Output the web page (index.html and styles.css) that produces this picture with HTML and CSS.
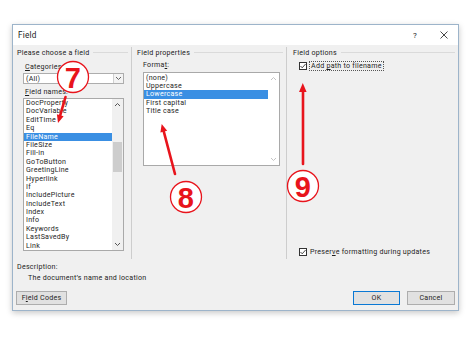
FILE: index.html
```html
<!DOCTYPE html>
<html>
<head>
<meta charset="utf-8">
<title>Field</title>
<link rel="stylesheet" href="styles.css">
</head>
<body>
<div class="dialog">
  <div class="titlebar">
    <span class="title">Field</span>
    <span class="help">?</span>
    <span class="close"><svg width="8" height="8" viewBox="0 0 8 8"><path d="M0.5 0.5 L7.5 7.5 M7.5 0.5 L0.5 7.5" stroke="#333" stroke-width="0.9" fill="none"/></svg></span>
  </div>
  <div class="body">
    <div class="columns">
      <div class="col col-left">
        <div class="group-head">Please choose a field</div>
        <div class="lbl lbl-left"><u>C</u>ategories:</div>
        <div class="combo">
          <span class="combo-text">(All)</span>
          <span class="combo-btn"><svg width="7" height="5" viewBox="0 0 7 5"><path d="M1 1 L3.5 3.5 L6 1" stroke="#555" stroke-width="0.9" fill="none"/></svg></span>
        </div>
        <div class="lbl lbl-left lbl-names"><u>F</u>ield names:</div>
        <div class="listbox names">
          <div class="items">
            <div class="item">DocProperty</div>
            <div class="item">DocVariable</div>
            <div class="item">EditTime</div>
            <div class="item">Eq</div>
            <div class="item sel">FileName</div>
            <div class="item">FileSize</div>
            <div class="item">Fill-in</div>
            <div class="item">GoToButton</div>
            <div class="item">GreetingLine</div>
            <div class="item">Hyperlink</div>
            <div class="item">If</div>
            <div class="item">IncludePicture</div>
            <div class="item">IncludeText</div>
            <div class="item">Index</div>
            <div class="item">Info</div>
            <div class="item">Keywords</div>
            <div class="item">LastSavedBy</div>
            <div class="item">Link</div>
          </div>
          <div class="sb">
            <div class="sb-btn"><svg width="7" height="5" viewBox="0 0 7 5"><path d="M1 4 L3.5 1.5 L6 4" stroke="#555" stroke-width="1" fill="none"/></svg></div>
            <div class="sb-track"><div class="sb-thumb"></div></div>
            <div class="sb-btn"><svg width="7" height="5" viewBox="0 0 7 5"><path d="M1 1 L3.5 3.5 L6 1" stroke="#555" stroke-width="1" fill="none"/></svg></div>
          </div>
        </div>
      </div>
      <div class="col col-mid">
        <div class="group-head">Field properties</div>
        <div class="lbl lbl-mid">Forma<u>t</u>:</div>
        <div class="listbox formats">
          <div class="items">
            <div class="item">(none)</div>
            <div class="item">Uppercase</div>
            <div class="item sel">Lowercase</div>
            <div class="item">First capital</div>
            <div class="item">Title case</div>
          </div>
          <div class="sb sb-off">
            <div class="sb-btn"><svg width="7" height="5" viewBox="0 0 7 5"><path d="M1 4 L3.5 1.5 L6 4" stroke="#c4c4c4" stroke-width="1" fill="none"/></svg></div>
            <div class="sb-track"></div>
            <div class="sb-btn"><svg width="7" height="5" viewBox="0 0 7 5"><path d="M1 1 L3.5 3.5 L6 1" stroke="#c4c4c4" stroke-width="1" fill="none"/></svg></div>
          </div>
        </div>
      </div>
      <div class="col col-right">
        <div class="group-head">Field options</div>
        <div class="check-row first">
          <span class="box"><svg width="8" height="8" viewBox="0 0 8 8"><path d="M1.5 4 L3.2 5.8 L6.6 2" stroke="#333" stroke-width="0.9" fill="none"/></svg></span>
          <span class="check-label focus">Add <u>p</u>ath to filename</span>
        </div>
        <div class="check-row last">
          <span class="box"><svg width="8" height="8" viewBox="0 0 8 8"><path d="M1.5 4 L3.2 5.8 L6.6 2" stroke="#333" stroke-width="0.9" fill="none"/></svg></span>
          <span class="check-label">Preser<u>v</u>e formatting during updates</span>
        </div>
      </div>
    </div>
    <div class="desc-label">Description:</div>
    <div class="desc-text">The document’s name and location</div>
    <div class="buttons">
      <button class="btn btn-codes">F<u>i</u>eld Codes</button>
      <span class="spacer"></span>
      <button class="btn btn-ok">OK</button>
      <button class="btn btn-cancel">Cancel</button>
    </div>
  </div>
</div>
<svg class="annot" width="474" height="338" viewBox="0 0 474 338">
  <g fill="#fff" stroke="#e8141c" stroke-width="1.3">
    <circle cx="73" cy="77" r="15.5"/>
    <circle cx="186" cy="197" r="15.5"/>
    <circle cx="303" cy="186" r="15.5"/>
  </g>
  <g fill="#e8141c" font-family="'Liberation Sans', Arial, sans-serif" font-weight="bold" font-size="29" text-anchor="middle">
    <text x="73" y="87.5">7</text>
    <text x="186" y="207.5">8</text>
    <text x="303" y="196.5">9</text>
  </g>
  <g stroke="#e8141c" stroke-width="2.6" stroke-linecap="round" fill="none">
    <line x1="65.5" y1="97" x2="60.2" y2="115.3"/>
    <line x1="175" y1="174" x2="163.8" y2="131.7"/>
    <line x1="303" y1="164" x2="303" y2="91"/>
  </g>
  <g fill="#e8141c">
    <polygon points="58,123 63.6,116.3 56.9,114.3"/>
    <polygon points="161.7,124 167.2,130.8 160.4,132.6"/>
    <polygon points="302.8,83 306.6,92 299,92"/>
  </g>
</svg>
</body>
</html>
```

FILE: styles.css
```css
* { box-sizing: border-box; }

body {
  margin: 0;
  width: 474px;
  height: 338px;
  position: relative;
  overflow: hidden;
  background: #fff;
  font-family: Roboto, "Open Sans", sans-serif;
  font-size: 7.1px;
  letter-spacing: 0.25px;
  color: #1e1e1e;
}

u { text-decoration-thickness: 0.6px; text-underline-offset: 1px; }

.dialog {
  margin: 24px 0 0 12px;
  width: 447px;
  height: 287px;
  border: 1px solid #9db4ca;
  background: #f0f0f0;
  box-shadow: 0 2px 6px rgba(0, 0, 0, 0.22);
  display: flex;
  flex-direction: column;
}

.titlebar {
  height: 20px;
  background: #fff;
  display: flex;
  align-items: center;
  padding: 0 6px 0 5px;
  font-size: 8.2px;
  color: #222;
}
.title { flex: 1; }
.help { width: 12px; text-align: center; font-size: 8px; }
.close { width: 16px; margin-left: 15px; display: flex; justify-content: center; }

.body { flex: 1; display: flex; flex-direction: column; }

.columns { display: flex; margin-top: 2px; height: 212px; }
.col { display: flex; flex-direction: column; border-right: 1px solid #cdcdcd; padding-top: 1px; }
.col-left { width: 119px; }
.col-mid { width: 155px; }
.col-right { flex: 1; border-right: none; }

.group-head {
  display: flex;
  align-items: center;
  height: 9px;
  line-height: 9px;
  white-space: nowrap;
  color: #222;
}
.group-head::after {
  content: "";
  flex: 1;
  border-top: 1px solid #dadada;
  margin: 0 3px 0 4px;
}
.col-left .group-head { padding-left: 4px; }
.col-mid .group-head { padding-left: 5px; }
.col-right .group-head { padding-left: 6px; }

.lbl { height: 9px; line-height: 9px; }
.lbl-left { margin: 4.5px 0 0 12px; }
.lbl-names { margin-top: 3px; }
.lbl-mid { margin: 3px 0 0 11px; }

.combo {
  margin: 2.5px 0 0 10px;
  width: 101px;
  height: 11px;
  border: 1px solid #adadad;
  background: #fff;
  display: flex;
  align-items: center;
}
.combo-text { flex: 1; padding-left: 2px; line-height: 9px; }
.combo-btn {
  width: 10px;
  height: 9px;
  display: flex;
  align-items: center;
  justify-content: center;
  background: #f3f3f3;
  border-left: 1px solid #d0d0d0;
}

.listbox {
  background: #fff;
  border: 1px solid #a9a9a9;
  display: flex;
}
.names { margin: 2px 0 0 10px; width: 101px; height: 153px; }
.formats { margin: 3px 0 0 11px; width: 137px; height: 94px; }
.formats .items { padding-top: 0.5px; }

.items { flex: 1; overflow: hidden; }
.item {
  height: 8.4px;
  line-height: 8.4px;
  padding-left: 2px;
  white-space: nowrap;
}
.item.sel { background: #3a8fe3; color: #fff; }

.sb { width: 11px; display: flex; flex-direction: column; background: #f0f0f0; }
.sb-off { background: #fff; }
.sb-btn { height: 11px; display: flex; align-items: center; justify-content: center; }
.sb-track { flex: 1; display: flex; justify-content: center; }
.sb-thumb { width: 9px; height: 30px; margin-top: 32px; background: #cdcdcd; }

.check-row { display: flex; align-items: center; height: 9px; padding-left: 12px; }
.check-row.first { margin-top: 4.5px; }
.check-row.last { margin-top: auto; margin-bottom: 2.8px; }
.box {
  width: 8px;
  height: 8px;
  border: 1px solid #333;
  background: #fff;
  display: flex;
  align-items: center;
  justify-content: center;
  margin-right: 3px;
}
.box svg { flex: none; }
.check-label { line-height: 8px; white-space: nowrap; }
.check-label.focus { border: 1px dotted #555; padding: 0 1px; margin-left: -1px; }

.desc-label { margin: 3.2px 0 0 4px; height: 9px; line-height: 9px; }
.desc-text { margin: 1.6px 0 0 15px; height: 9px; line-height: 9px; }

.buttons { display: flex; margin: 9px 3px 0 3px; }
.spacer { flex: 1; }
.btn {
  font-family: inherit;
  font-size: 7.1px;
  letter-spacing: 0.25px;
  color: #1e1e1e;
  height: 14px;
  padding: 0;
  background: #e1e1e1;
  border: 1px solid #adadad;
  border-radius: 0;
}
.btn-codes { width: 51px; }
.btn-ok { width: 47px; border: 1.5px solid #0a78d4; }
.btn-cancel { width: 48px; margin-left: 7px; }

.annot { position: absolute; left: 0; top: 0; pointer-events: none; }
```
